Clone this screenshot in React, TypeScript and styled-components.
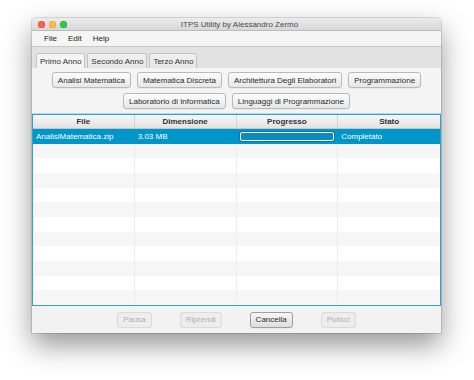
import React from "react";
import styled, { createGlobalStyle } from "styled-components";

const Global = createGlobalStyle`
  html, body { margin: 0; padding: 0; background: #ffffff; }
  body { font-family: "Liberation Sans", Arial, sans-serif; font-size: 8px; color: #333333; }
  * { box-sizing: border-box; }
`;

const Page = styled.div`
  width: 474px;
  height: 380px;
  padding: 18px 0 0 32px;
  overflow: hidden;
`;

const Window = styled.div`
  width: 409px;
  height: 315px;
  display: flex;
  flex-direction: column;
  border-radius: 4px 4px 0 0;
  overflow: hidden;
  background: #f3f3f3;
  box-shadow: 0 0 0 1px rgba(0, 0, 0, 0.12), 0 12px 28px rgba(0, 0, 0, 0.42);
`;

const TitleBar = styled.div`
  flex: none;
  height: 13px;
  display: grid;
  grid-template-columns: 1fr auto 1fr;
  align-items: center;
  padding: 0 0 0 6px;
  background: linear-gradient(#ececec, #d7d7d7);
  border-bottom: 1px solid #bcbcbc;
`;

const Lights = styled.div`
  display: flex;
  gap: 4px;
`;

const Light = styled.span<{ $c: string; $b: string }>`
  width: 7px;
  height: 7px;
  border-radius: 50%;
  background: ${(p) => p.$c};
  box-shadow: inset 0 0 0 0.5px ${(p) => p.$b};
`;

const Title = styled.div`
  color: #4a4a4a;
  font-size: 8px;
  white-space: nowrap;
`;

const MenuBar = styled.div`
  flex: none;
  height: 16px;
  display: flex;
  align-items: center;
  gap: 11px;
  padding-left: 12px;
  background: #f5f5f5;
  border-bottom: 1px solid #c8c8c8;
`;

const MenuItem = styled.span`
  color: #222;
  font-size: 8px;
`;

const TabHeader = styled.div`
  flex: none;
  height: 21px;
  display: flex;
  align-items: flex-end;
  gap: 2px;
  padding-left: 4px;
  background: #e2e2e2;
`;

const Tab = styled.div<{ $active?: boolean }>`
  height: 15px;
  padding: 0 3px;
  display: flex;
  align-items: center;
  border: 1px solid #c3c3c3;
  border-bottom: none;
  border-radius: 2px 2px 0 0;
  background: ${(p) => (p.$active ? "#f4f4f4" : "linear-gradient(#f0f0f0, #e6e6e6)")};
  color: #333;
  white-space: nowrap;
`;

const TabContent = styled.div`
  flex: none;
  display: flex;
  flex-direction: column;
  align-items: center;
  gap: 5px;
  padding: 4px 0 5px;
  background: #f4f4f4;
`;

const ButtonRow = styled.div`
  display: flex;
  gap: 6px;
  justify-content: center;
`;

const Button = styled.button<{ $disabled?: boolean; $default?: boolean }>`
  height: 16px;
  padding: 0 5px;
  font-family: "Liberation Sans", Arial, sans-serif;
  font-size: 8px;
  white-space: nowrap;
  border-radius: 3px;
  border: 1px solid ${(p) => (p.$disabled ? "#dadada" : p.$default ? "#9e9e9e" : "#b9b9b9")};
  background: ${(p) =>
    p.$disabled
      ? "#ededed"
      : p.$default
      ? "linear-gradient(#f6f6f6, #dedede)"
      : "linear-gradient(#fcfcfc, #e7e7e7)"};
  color: ${(p) => (p.$disabled ? "#b0b0b0" : "#2a2a2a")};
  box-shadow: ${(p) => (p.$disabled ? "none" : "0 0.5px 0 rgba(0,0,0,0.08)")};
`;

const Table = styled.div`
  flex: 1;
  display: flex;
  flex-direction: column;
  min-height: 0;
  background: #ffffff;
  border: 1px solid #2fa2cf;
  box-shadow: 0 0 0 1px rgba(120, 195, 225, 0.55);
`;

const HeaderRow = styled.div`
  flex: none;
  height: 14px;
  display: grid;
  grid-template-columns: repeat(4, 1fr);
  background: linear-gradient(#f7f7f7, #e2e2e2);
  border-bottom: 1px solid #c6c6c6;
`;

const HeaderCell = styled.div`
  display: flex;
  align-items: center;
  justify-content: center;
  font-weight: bold;
  color: #333;
  border-right: 1px solid #d2d2d2;
  &:last-child { border-right: none; }
`;

const Body = styled.div`
  flex: 1;
  min-height: 0;
  overflow: hidden;
`;

const Row = styled.div<{ $selected?: boolean; $odd?: boolean }>`
  height: 14.67px;
  display: grid;
  grid-template-columns: repeat(4, 1fr);
  background: ${(p) => (p.$selected ? "#0096c9" : p.$odd ? "#f6f6f6" : "#ffffff")};
  color: ${(p) => (p.$selected ? "#ffffff" : "#333")};
`;

const Cell = styled.div<{ $selected?: boolean }>`
  display: flex;
  align-items: center;
  padding: 0 3px;
  white-space: nowrap;
  overflow: hidden;
  border-right: 1px solid ${(p) => (p.$selected ? "transparent" : "#ececec")};
  &:last-child { border-right: none; }
`;

const Progress = styled.div`
  width: 100%;
  height: 9px;
  border: 1px solid #ffffff;
  border-radius: 2px;
  background: #0a8cbf;
  box-shadow: 0 0 0 1px rgba(0, 70, 110, 0.35);
`;

const BottomBar = styled.div`
  flex: none;
  height: 27px;
  display: flex;
  align-items: center;
  justify-content: center;
  gap: 28px;
  background: #f2f2f2;
`;

const columns = ["File", "Dimensione", "Progresso", "Stato"];

export default function App() {
  const emptyRows = Array.from({ length: 11 }, (_, i) => i);
  return (
    <>
      <Global />
      <Page>
        <Window>
          <TitleBar>
            <Lights>
              <Light $c="#fc605c" $b="#de4a46" />
              <Light $c="#fdbc40" $b="#dea034" />
              <Light $c="#34c84a" $b="#27aa38" />
            </Lights>
            <Title>ITPS Utility by Alessandro Zermo</Title>
            <div />
          </TitleBar>
          <MenuBar>
            <MenuItem>File</MenuItem>
            <MenuItem>Edit</MenuItem>
            <MenuItem>Help</MenuItem>
          </MenuBar>
          <TabHeader>
            <Tab $active>Primo Anno</Tab>
            <Tab>Secondo Anno</Tab>
            <Tab>Terzo Anno</Tab>
          </TabHeader>
          <TabContent>
            <ButtonRow>
              <Button>Analisi Matematica</Button>
              <Button>Matematica Discreta</Button>
              <Button>Architettura Degli Elaboratori</Button>
              <Button>Programmazione</Button>
            </ButtonRow>
            <ButtonRow>
              <Button>Laboratorio di Informatica</Button>
              <Button>Linguaggi di Programmazione</Button>
            </ButtonRow>
          </TabContent>
          <Table>
            <HeaderRow>
              {columns.map((c) => (
                <HeaderCell key={c}>{c}</HeaderCell>
              ))}
            </HeaderRow>
            <Body>
              <Row $selected>
                <Cell $selected>AnalisiMatematica.zip</Cell>
                <Cell $selected>3.03 MB</Cell>
                <Cell $selected>
                  <Progress />
                </Cell>
                <Cell $selected>Completato</Cell>
              </Row>
              {emptyRows.map((i) => (
                <Row key={i} $odd={i % 2 === 0}>
                  <Cell />
                  <Cell />
                  <Cell />
                  <Cell />
                </Row>
              ))}
            </Body>
          </Table>
          <BottomBar>
            <Button $disabled>Pausa</Button>
            <Button $disabled>Riprendi</Button>
            <Button $default>Cancella</Button>
            <Button $disabled>Pulisci</Button>
          </BottomBar>
        </Window>
      </Page>
    </>
  );
}
